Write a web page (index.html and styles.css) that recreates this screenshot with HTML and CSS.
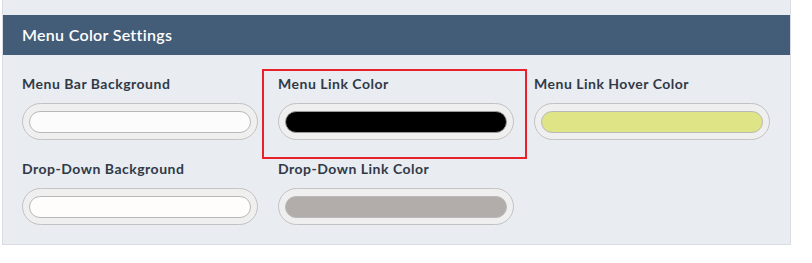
FILE: index.html
```html
<!DOCTYPE html>
<html>
<head>
<meta charset="utf-8">
<link rel="stylesheet" href="styles.css">
</head>
<body>
<div class="panel">
  <div class="panel-header">Menu Color Settings</div>
  <div class="panel-body">
    <div class="field">
      <div class="label">Menu Bar Background</div>
      <div class="swatch"><div class="chip chip-white"></div></div>
    </div>
    <div class="field">
      <div class="label">Menu Link Color</div>
      <div class="swatch"><div class="chip chip-black"></div></div>
      <div class="highlight"></div>
    </div>
    <div class="field">
      <div class="label">Menu Link Hover Color</div>
      <div class="swatch"><div class="chip chip-yellow"></div></div>
    </div>
    <div class="field">
      <div class="label">Drop-Down Background</div>
      <div class="swatch"><div class="chip chip-white2"></div></div>
    </div>
    <div class="field">
      <div class="label">Drop-Down Link Color</div>
      <div class="swatch"><div class="chip chip-gray"></div></div>
    </div>
  </div>
</div>
</body>
</html>
```
FILE: styles.css
```css
html, body {
  margin: 0;
  padding: 0;
  background: #ffffff;
}
body {
  font-family: "Lato", "Noto Sans", sans-serif;
}
.panel {
  margin-left: 2px;
  width: 787px;
  background: #e9ecf1;
  border: 1px solid #d9dde3;
  border-top: none;
  padding-top: 15px;
}
.panel-header {
  background: #435c78;
  color: #ffffff;
  height: 40px;
  line-height: 40px;
  padding-left: 19px;
  font-size: 16px;
  font-weight: 600;
  letter-spacing: 0.3px;
}
.panel-body {
  display: grid;
  grid-template-columns: 236px 236px 236px;
  column-gap: 20px;
  row-gap: 20px;
  padding: 20px 19px 19px;
}
.field {
  position: relative;
}
.label {
  font-size: 14px;
  font-weight: 700;
  color: #303a47;
  height: 18px;
  line-height: 18px;
  letter-spacing: 0.5px;
}
.swatch {
  margin-top: 10px;
  border: 1px solid #c2c2c2;
  border-radius: 19px;
  background: #efefef;
  padding: 7px 6px;
  box-sizing: border-box;
  height: 37px;
}
.chip {
  height: 22px;
  border-radius: 11px;
  border: 1px solid #b9b9b9;
  box-sizing: border-box;
}
.chip-white { background: #fcfcfc; }
.chip-black { background: #000000; border-color: #9a9a9a; }
.chip-yellow { background: #dfe486; }
.chip-white2 { background: #fffcfc; }
.chip-gray { background: #b2acab; }
.highlight {
  position: absolute;
  left: -16px;
  top: -6px;
  width: 265px;
  height: 90px;
  border: 2px solid #e8212c;
  box-sizing: border-box;
}
```
